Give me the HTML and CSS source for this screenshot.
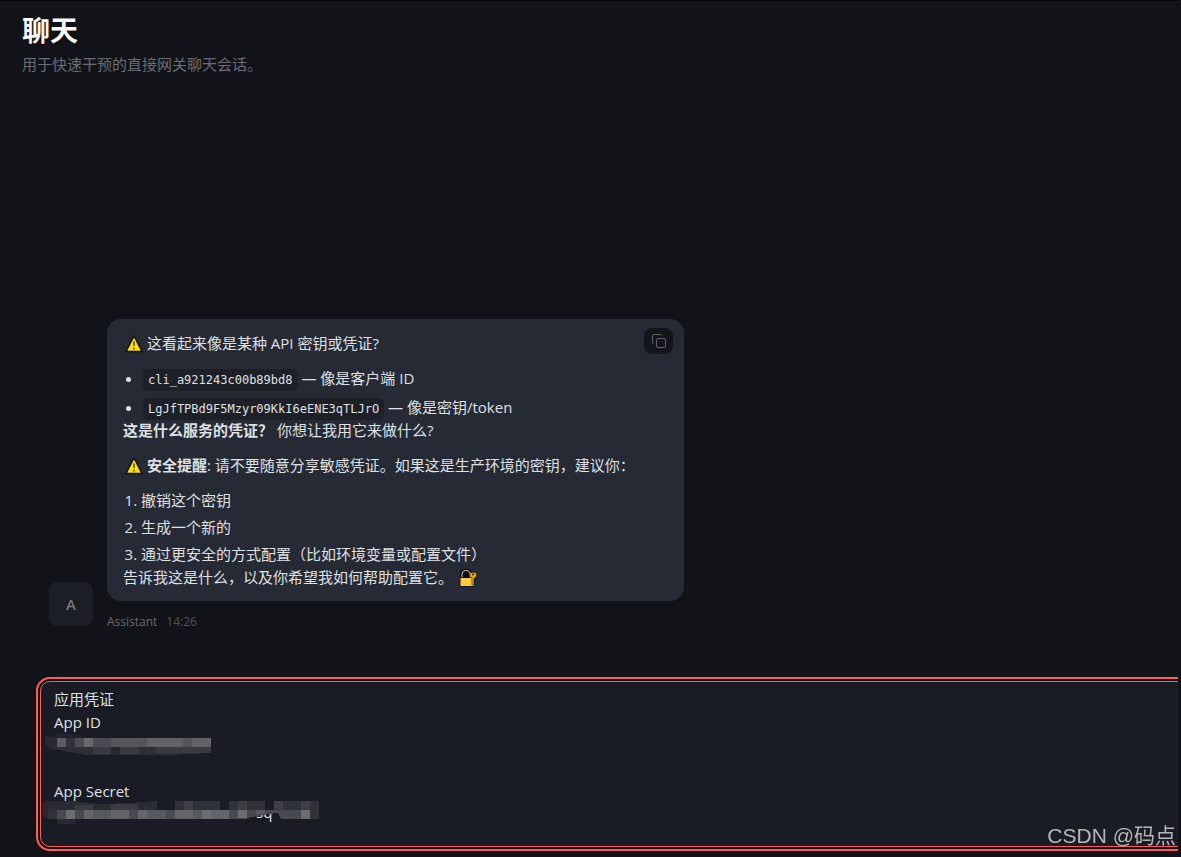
FILE: index.html
```html
<!DOCTYPE html>
<html lang="zh-CN">
  <head>
    <meta charset="utf-8" />
    <meta name="viewport" content="width=device-width, initial-scale=1">
    <title>聊天</title>
    <link rel="stylesheet" href="styles.css">
  </head>

  <body>
    <main class="page">
      <header class="header">
        <h1>聊天</h1>
        <p class="subtitle">用于快速干预的直接网关聊天会话。</p>
      </header>

      <section class="thread">
        <div class="avatar">A</div>
        <div class="message">
          <article class="bubble">
            <button class="copy_btn" type="button" title="复制" aria-label="复制">
              <svg viewBox="0 0 16 16"><rect x="5.5" y="5.5" width="9" height="9" rx="1.5"/><path d="M2.5 10.5Q1.5 10.5 1.5 9V3Q1.5 1.5 3 1.5H9Q10.5 1.5 10.5 2.5"/></svg>
            </button>

            <p><svg class="emoji" viewBox="0 0 18 18"><path d="M9 1 17 16.5H1Z" fill="#ffde00" stroke="#111" stroke-width="1.5" stroke-linejoin="round"/><path d="M9 6.5V11M9 12.5V14.5" stroke="#7a6a00" stroke-width="2"/></svg> 这看起来像是某种 API 密钥或凭证?</p>
            <ul>
              <li><code>cli_a921243c00b89bd8</code> — 像是客户端 ID</li>
              <li><code>LgJfTPBd9F5Mzyr09KkI6eENE3qTLJrO</code> — 像是密钥/token</li>
            </ul>
            <p><strong>这是什么服务的凭证？</strong> 你想让我用它来做什么?</p>
            <p><svg class="emoji" viewBox="0 0 18 18"><path d="M9 1 17 16.5H1Z" fill="#ffde00" stroke="#111" stroke-width="1.5" stroke-linejoin="round"/><path d="M9 6.5V11M9 12.5V14.5" stroke="#7a6a00" stroke-width="2"/></svg> <strong>安全提醒</strong>: 请不要随意分享敏感凭证。如果这是生产环境的密钥，建议你：</p>
            <ol>
              <li>撤销这个密钥</li>
              <li>生成一个新的</li>
              <li>通过更安全的方式配置（比如环境变量或配置文件）</li>
            </ol>
            <p>告诉我这是什么，以及你希望我如何帮助配置它。 <svg class="emoji" viewBox="0 0 18 18"><path d="M2.5 9V5.5Q3 1 7 1T11.5 5.5V9" fill="#050505" stroke="#050505" stroke-width="3"/><path d="M3 9V5.5Q3.5 1.5 7 1.5T11 5.5V9" fill="#050505" stroke="#bbb" stroke-width="1.2"/><rect x="1" y="8.5" width="14" height="9" rx="1" fill="#ffc83d" stroke="#111"/><path d="M12.5 9H15V17H12.5Z" fill="#f7a600"/><path d="M11 3.5H16L17.5 5V7L16 9H15V16H13V9L11 8Z" fill="#f7a600" stroke="#111" stroke-width=".5"/><circle cx="14" cy="5.5" r="1" fill="#222"/></svg></p>
          </article>
          <footer class="meta"><span>Assistant</span><time>14:26</time></footer>
        </div>
      </section>

      <form class="compose">
        <textarea aria-label="消息" spellcheck="false">应用凭证
App ID


App Secret
</textarea>
        <!-- masked credential values -->
        <span class="masked_text">sq</span>
        <svg class="mask" width="280" height="90" viewBox="0 0 280 90" shape-rendering="crispEdges">
          <path d="M3 5Q1 14 8 16L43 22H128L167 20V5Z" fill="#2c2f36"/>
          <path d="M4 5 14 0 42 3V5Z" fill="#20232b"/>
          <path d="M1 5Q-1 9 4 14V1Z" fill="#35212a"/>
          <path d="M4 5H13V14H4Z" fill="#262932"/>
          <path d="M22 5H31V14H22Z" fill="#303239"/>
          <path d="M13 5H22V14H13Z" fill="#5c5d61"/>
          <path d="M31 5H40V14H31ZM58 5H67V14H58Z" fill="#4b4c51"/>
          <path d="M40 5H49V14H40Z" fill="#68696d"/>
          <path d="M49 5H58V14H49Z" fill="#494c55"/>
          <path d="M67 5H103V14H67Z" fill="#56575b"/>
          <path d="M103 5H167V14H103Z" fill="#616266"/>
          <path d="M94 5H103V14H94ZM139 5H148V14H139Z" fill="#535459"/>
          <path d="M49 14H67V21H49ZM76 14H94V21H76ZM112 14H167V20H112Z" fill="#393b42"/>
          <path d="M67 14H76V22H67Z" fill="#25282f"/>

          <path d="M-2 70Q0 68 5 68V86Q-2 86-2 77Z" fill="#35212a"/>
          <path d="M4 68H30L56 71 85 70 113 68V77H4Z" fill="#292c33"/>
          <path d="M31 72H49V77H31ZM67 71H94V77H67Z" fill="#3b3c41"/>
          <path d="M131 68H176V77H131ZM185 68H221V77H185ZM230 68H275V77H230Z" fill="#303239"/>
          <path d="M140 68H149V77H140ZM194 68H203V77H194ZM230 68H239V77H230ZM257 68H266V77H257Z" fill="#3e4045"/>
          <path d="M4 77H275V86H237L234 80Q218 81 201 86H4Z" fill="#484a4f"/>
          <path d="M13 86H32V91H13Z" fill="#262932"/>
          <path d="M4 77H13V86H4ZM266 77H275V86H266Z" fill="#32343c"/>
          <path d="M22 77H31V86H22ZM158 77H167V86H158ZM194 77H203V85H194ZM257 77H266V86H257Z" fill="#6c6d71"/>
          <path d="M40 77H49V86H40ZM67 77H85V86H67ZM94 77H103V86H94ZM131 77H149V86H131ZM167 77H185V86H167Z" fill="#646569"/>
          <path d="M49 77H67V86H49ZM103 77H122V86H103ZM149 77H158V86H149ZM212 77H221V81H212Z" fill="#57595d"/>
        </svg>
      </form>
    </main>

    <div class="watermark">CSDN @码点</div>
  </body>
</html>
```
FILE: styles.css
```css
*
{
  box-sizing: border-box;
}
html, body
{
  margin: 0;
  height: 100%;
}
body
{
  background-color: #121318;
  color: #dfe0e3;
  font-family: "Open Sans", "Noto Sans CJK SC", sans-serif;
  font-size: 15px;
  line-height: 23px;
  overflow: hidden;
}
.page
{
  display: flex;
  flex-direction: column;
  min-height: 100%;
  margin-right: 3px;
  padding-bottom: 10px;
  overflow: hidden;
  border-top: 1px solid #050608;
}
.header
{
  padding: 9px 22px;
}
h1
{
  margin: 0;
  color: #fafafa;
  font-size: 28px;
  line-height: 40px;
  font-weight: 700;
}
.subtitle
{
  margin: 3px 0 0;
  color: #6b6c73;
}
.thread
{
  flex: 1;
  display: flex;
  align-items: flex-end;
  gap: 14px;
  padding: 0 49px 51px;
}
.avatar
{
  display: grid;
  place-items: center;
  flex: none;
  width: 44px;
  height: 44px;
  margin-bottom: 4px;
  border-radius: 8px;
  background-color: #1b1e25;
  color: #74757c;
  font-weight: 600;
}
.message
{
  width: 100%;
}
.bubble
{
  position: relative;
  width: 56%;
  min-width: 577px;
  padding: 13px 16px 12px;
  border-radius: 14px;
  background-color: #262a34;
}
.bubble p, .bubble ul, .bubble ol
{
  margin: 0;
}
.bubble p + p, .bubble p + ul, .bubble p + ol
{
  margin-top: 12px;
}
.bubble ul
{
  padding-left: 20px;
}
.bubble ol
{
  padding-left: 18px;
}
.bubble ul li + li
{
  margin-top: 6px;
}
.bubble ol li + li
{
  margin-top: 4px;
}
code
{
  padding: 4px 5px;
  border-radius: 5px;
  background-color: #1d2026;
  font-family: "DejaVu Sans Mono", monospace;
  font-size: 12px;
  line-height: 16px;
}
.emoji
{
  width: 18px;
  height: 18px;
  margin-left: 2px;
  vertical-align: -4px;
}
.copy_btn
{
  position: absolute;
  top: 9px;
  right: 11px;
  display: grid;
  place-items: center;
  width: 29px;
  height: 26px;
  padding: 0;
  border: 0;
  border-radius: 8px;
  background-color: #14151a;
  color: #606168;
  cursor: pointer;
}
.copy_btn svg
{
  width: 16px;
  height: 16px;
  fill: none;
  stroke: currentColor;
}
.meta
{
  display: flex;
  gap: 9px;
  padding-top: 12px;
  color: #67686e;
  font-size: 12px;
  line-height: 17px;
}
.meta time
{
  color: #505158;
}
.compose
{
  position: relative;
  display: flex;
  margin: 0 -20px 0 40px;
}
textarea
{
  flex: 1;
  height: 166px;
  padding: 6px 13px;
  border: 1px solid #ff5c5c;
  border-radius: 10px;
  outline: 2px solid #ff5c5c;
  outline-offset: 2px;
  background-color: #191c24;
  color: inherit;
  font: inherit;
  resize: none;
}
.mask
{
  position: absolute;
  top: 52px;
  left: 4px;
  overflow: visible;
}
.masked_text
{
  position: absolute;
  top: 120px;
  left: 216px;
}
.watermark
{
  position: fixed;
  right: 5px;
  bottom: 5px;
  color: #b5b6b8;
  font-family: "Liberation Sans", "Noto Sans CJK SC", sans-serif;
  font-size: 21px;
  line-height: 32px;
}
```
